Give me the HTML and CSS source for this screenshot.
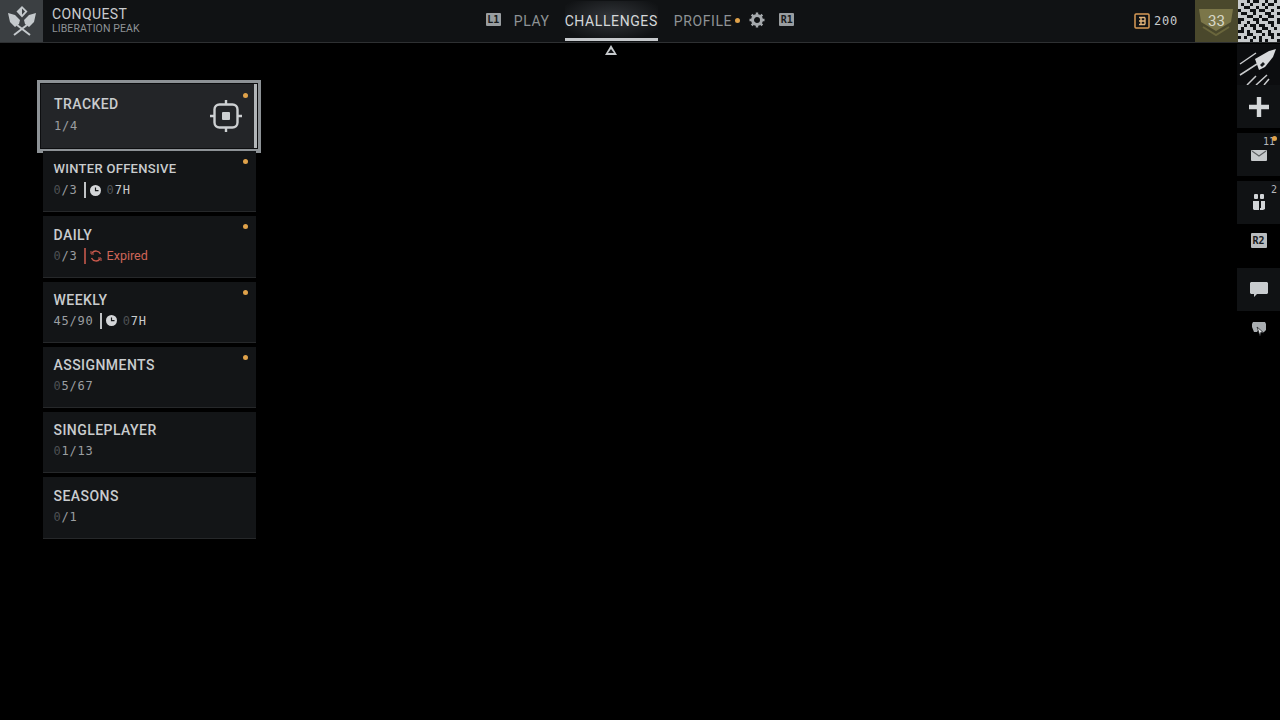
FILE: index.html
```html
<!DOCTYPE html>
<html lang="en">
<head>
    <meta charset="UTF-8">
    <title>Challenges</title>
    <meta name="viewport" content="width=device-width, initial-scale=1.0">
    <link rel="stylesheet" href="styles.css">
</head>
<body>
    <div class="topbar">
        <div class="mode">
            <div class="mode-icon">
                <svg width="32" height="32" viewBox="0 0 32 32">
                    <path d="M16 1l5.500 5.500-5.500 6-5.500-6z" fill="#c4c9cc"/>
                    <path d="M16 3.500l3 3-3 3.300z" fill="#3b3f42"/>
                    <path d="M2 8l7 2 5 5-1 4-4 3-5-5z M30 8l-7 2-5 5 1 4 4 3 5-5z" fill="#c4c9cc"/>
                    <path d="M11 20l13 10M21 20L8 30" stroke="#c4c9cc" stroke-width="2" fill="none"/>
                </svg>
            </div>
            <div class="mode-text">
                <div class="mode-name">CONQUEST</div>
                <div class="mode-map">LIBERATION PEAK</div>
            </div>
        </div>
        <div class="nav">
            <span class="key">L1</span>
            <a class="nav-link nav-play">PLAY</a>
            <a class="nav-link active">CHALLENGES</a>
            <a class="nav-link nav-profile">PROFILE</a>
            <span class="dot nav-dot"></span>
            <svg class="gear" width="16" height="16" viewBox="0 0 16 16">
                <circle cx="8" cy="8" r="4.500" fill="none" stroke="#a5a9ac" stroke-width="3"/>
                <path d="M8 0.500v15M0.500 8h15M2.700 2.700l10.600 10.600M13.300 2.700L2.700 13.300" stroke="#a5a9ac" stroke-width="2.400" stroke-dasharray="3 9"/>
            </svg>
            <span class="key key-r">R1</span>
        </div>
        <div class="status">
            <div class="credits">
                <svg width="16" height="16" viewBox="0 0 16 16">
                    <rect x="1" y="1" width="14" height="14" rx="1" fill="none" stroke="#d79a55" stroke-width="1.500"/>
                    <path d="M5 4.500h6M5 8h6M5 11.500h6M7 4.500v7M11 4.500v7" stroke="#e3b57c" stroke-width="1.400" fill="none"/>
                </svg>
                <span>200</span>
            </div>
            <div class="rank">
                <svg class="chevron" width="40" height="42" viewBox="0 0 40 42">
                    <path d="M3 9h34l-2 13-15 9-15-9z" fill="#7b7649"/>
                    <path d="M7 27l13 8 13-8" stroke="#6a663c" stroke-width="2" fill="none"/>
                </svg>
                <span>33</span>
            </div>
            <svg class="qr" width="42" height="42" viewBox="0 0 14 14" shape-rendering="crispEdges">
                <path fill="none" stroke="#c8cbcd" stroke-width="1" d="M0 .5h3m1 0h1m2 0h2m1 0h2m1 0h1M0 1.500h1m1 0h2m1 0h3m1 0h1m2 0h2M0 2.500h2m2 0h2m1 0h2m1 0h3M1 3.500h3m2 0h1m2 0h2m1 0h2M0 4.500h1m2 0h2m1 0h3m2 0h2M0 5.500h3m2 0h2m1 0h2m2 0h2M2 6.500h3m2 0h1m2 0h3M1 7.500h2m1 0h2m1 0h3m2 0h1M0 8.500h2m1 0h1m2 0h1m2 0h2m1 0h2M0 9.500h1m1 0h3m1 0h2m2 0h2m1 0h1M2 10.500h1m1 0h2m2 0h2m1 0h3M0 11.500h3m2 0h3m1 0h1m2 0h1M1 12.500h1m1 0h2m1 0h1m1 0h3m1 0h2M0 13.500h4m1 0h2m1 0h1m1 0h3"/>
            </svg>
        </div>
    </div>

    <div class="content">
        <div class="list">
            <div class="card tracked">
                <div class="card-text">
                    <div class="card-title">TRACKED</div>
                    <div class="card-meta"><span class="count">1/4</span></div>
                </div>
                <svg class="target" width="34" height="34" viewBox="0 0 34 34">
                    <rect x="5.500" y="5.500" width="23" height="23" rx="5" fill="none" stroke="#cdd0d2" stroke-width="2.400"/>
                    <rect x="13" y="13" width="8" height="8" rx="1" fill="#cdd0d2"/>
                    <path d="M17 1v4M17 29v4M1 17h4M29 17h4" stroke="#cdd0d2" stroke-width="2.400"/>
                </svg>
                <span class="dot card-dot"></span>
            </div>
            <div class="card">
                <div class="card-title title-small">WINTER OFFENSIVE</div>
                <div class="card-meta">
                    <span class="count"><i>0</i>/3</span>
                    <span class="sep"></span>
                    <svg class="clock" width="11" height="11" viewBox="0 0 11 11"><circle cx="5.500" cy="5.500" r="5.500" fill="#d4d6d8"/><path d="M5.500 2.500v3.200h3" stroke="#17191b" stroke-width="1.200" fill="none"/></svg>
                    <span class="time"><i>0</i>7H</span>
                </div>
                <span class="dot card-dot"></span>
            </div>
            <div class="card">
                <div class="card-title">DAILY</div>
                <div class="card-meta">
                    <span class="count"><i>0</i>/3</span>
                    <span class="sep sep-red"></span>
                    <svg class="clock" width="12" height="12" viewBox="0 0 12 12"><path d="M10.500 4A5 5 0 0 0 2 3M1.500 8A5 5 0 0 0 10 9" stroke="#c9584c" stroke-width="1.400" fill="none"/><path d="M1 1v3h3M11 11V8H8" stroke="#c9584c" stroke-width="1" fill="none"/></svg>
                    <span class="expired">Expired</span>
                </div>
                <span class="dot card-dot"></span>
            </div>
            <div class="card">
                <div class="card-title">WEEKLY</div>
                <div class="card-meta">
                    <span class="count">45/90</span>
                    <span class="sep"></span>
                    <svg class="clock" width="11" height="11" viewBox="0 0 11 11"><circle cx="5.500" cy="5.500" r="5.500" fill="#d4d6d8"/><path d="M5.500 2.500v3.200h3" stroke="#17191b" stroke-width="1.200" fill="none"/></svg>
                    <span class="time"><i>0</i>7H</span>
                </div>
                <span class="dot card-dot"></span>
            </div>
            <div class="card">
                <div class="card-title">ASSIGNMENTS</div>
                <div class="card-meta"><span class="count"><i>0</i>5/67</span></div>
                <span class="dot card-dot"></span>
            </div>
            <div class="card">
                <div class="card-title">SINGLEPLAYER</div>
                <div class="card-meta"><span class="count"><i>0</i>1/13</span></div>
            </div>
            <div class="card">
                <div class="card-title">SEASONS</div>
                <div class="card-meta"><span class="count"><i>0</i>/1</span></div>
            </div>
        </div>

        <div class="rail">
            <div class="rail-item rail-ship">
                <svg width="40" height="40" viewBox="0 0 40 40">
                    <path d="M16 14l14-8 7-2-3 8-8 10-6 3z" fill="#d8dadc"/>
                    <path d="M21 20l3-3 2 2-3 3z" fill="#17191b"/>
                    <path d="M1 19L17 8M1 30l17-11M8 40l9-9M17 40l11-10M25 40l5-6" stroke="#c9cbcd" stroke-width="1.500" fill="none"/>
                </svg>
            </div>
            <div class="rail-item rail-box">
                <svg width="20" height="20" viewBox="0 0 20 20"><path d="M10 0v20M0 10h20" stroke="#d4d7d9" stroke-width="4.400"/></svg>
            </div>
            <div class="rail-item rail-box rail-mail">
                <span class="badge">11</span>
                <span class="dot rail-dot"></span>
                <svg class="mail-icon" width="16" height="11" viewBox="0 0 16 11"><rect width="16" height="11" rx="1" fill="#c6c9cb"/><path d="M1 1l7 5 7-5" stroke="#5d6062" stroke-width="1.100" fill="none"/></svg>
            </div>
            <div class="rail-item rail-box rail-friends">
                <span class="badge">2</span>
                <svg width="14" height="17" viewBox="0 0 14 17" fill="#d2d5d7"><rect x="2" y="0" width="4" height="5" rx="1"/><rect x="8" y="0" width="4" height="5" rx="1"/><path d="M1 7h6v9H2l-1-1z"/><path d="M9 7h4v8l-2 1H8v-2h1z"/></svg>
            </div>
            <div class="rail-key"><span class="key key-r2">R2</span></div>
            <div class="rail-item rail-box rail-chat">
                <svg width="20" height="17" viewBox="0 0 20 17"><path d="M2 1h16l1 1v10l-1 1H8l-3 3v-3H2l-1-1V2z" fill="#c9cccf"/></svg>
            </div>
            <div class="rail-feedback">
                <svg width="16" height="16" viewBox="0 0 16 16"><path d="M2 1h12l1 2v6l-3 3-3-1-1-3-2 3H3L1 6V3z" fill="#a9adb0"/><path d="M6 6l3 9 1-4 3 1z" fill="#e1e3e4" stroke="#17191b" stroke-width=".7"/></svg>
            </div>
        </div>
    </div>
</body>
</html>
```

FILE: styles.css
```css
body {
    margin: 0;
    width: 1280px;
    height: 720px;
    overflow: hidden;
    background: #000;
    color: #c8cbce;
    font-family: "Roboto", "Liberation Sans", sans-serif;
}

/* top bar */
.topbar {
    height: 42px;
    background: #101214;
    border-bottom: 1px solid #2e3032;
    display: grid;
    grid-template-columns: 1fr auto 1fr;
}
.mode {
    display: flex;
    align-items: stretch;
}
.mode-icon {
    width: 43px;
    background: #3b3f42;
    display: flex;
    align-items: center;
    justify-content: center;
}
.mode-text {
    padding: 7px 0 0 9px;
}
.mode-name {
    font-size: 14px;
    line-height: 15px;
    letter-spacing: 0.4px;
    color: #c9ccce;
}
.mode-map {
    font-size: 10.5px;
    line-height: 14px;
    letter-spacing: 0.1px;
    color: #8f9396;
}
.nav {
    display: flex;
    align-items: center;
    height: 42px;
}
.key {
    font-family: "DejaVu Sans Mono", monospace;
    font-size: 10px;
    font-weight: bold;
    line-height: 13px;
    width: 15px;
    height: 13px;
    text-align: center;
    background: #999da0;
    color: #17191b;
    border-radius: 1px;
    margin-top: -3px;
}
.key-r {
    margin-left: 14px;
}
.nav-link {
    font-size: 14px;
    letter-spacing: 0.6px;
    color: #8e9295;
    height: 40px;
    line-height: 40px;
    box-sizing: border-box;
}
.nav-play {
    margin-left: 13px;
}
.nav-link.active {
    margin-left: 15px;
    color: #d5d8da;
    background: radial-gradient(ellipse 55px 24px at 50% 45%, #33363a, transparent);
    border-bottom: 3px solid #c6c9cc;
    position: relative;
}
.nav-link.active::after {
    content: "";
    position: absolute;
    left: 50%;
    top: 44px;
    margin-left: -6px;
    width: 0;
    height: 0;
    border-left: 6px solid transparent;
    border-right: 6px solid transparent;
    border-bottom: 10px solid #c6c9cc;
}
.nav-link.active::before {
    content: "";
    position: absolute;
    left: 50%;
    top: 48px;
    margin-left: -3px;
    width: 0;
    height: 0;
    border-left: 3px solid transparent;
    border-right: 3px solid transparent;
    border-bottom: 4px solid #111315;
    z-index: 1;
}
.nav-profile {
    margin-left: 16px;
}
.dot {
    width: 5px;
    height: 5px;
    border-radius: 50%;
    background: #e0a24a;
}
.nav-dot {
    margin: -2px 0 0 3px;
}
.gear {
    margin: -2px 0 0 9px;
}
.status {
    display: flex;
    justify-content: flex-end;
    align-items: stretch;
}
.credits {
    display: flex;
    align-items: center;
    gap: 4px;
    margin-right: 17px;
    font-family: "DejaVu Sans Mono", monospace;
    font-size: 12px;
    letter-spacing: 0.8px;
    color: #c8cbce;
}
.rank {
    width: 43px;
    background: #4a482c;
    position: relative;
    display: flex;
    align-items: center;
    justify-content: center;
    font-size: 15px;
    color: #d8d8c8;
}
.chevron {
    position: absolute;
    left: 1px;
    top: 0;
}
.rank span {
    position: relative;
}
.qr {
    display: block;
}

/* body */
.content {
    display: flex;
    justify-content: space-between;
    align-items: flex-start;
}
.list {
    margin: 37px 0 0 37px;
    width: 224px;
    display: flex;
    flex-direction: column;
    align-items: center;
    gap: 4px;
}
.card {
    position: relative;
    box-sizing: border-box;
    width: 213px;
    height: 61.25px;
    padding: 9.3px 10px 0 11px;
    background: #131517;
    border-bottom: 1px solid #26282a;
}
.card-title {
    font-size: 14px;
    line-height: 18px;
    font-weight: 500;
    letter-spacing: 0.45px;
    color: #c9ccce;
}
.title-small {
    font-size: 13px;
    letter-spacing: 0.3px;
}
.card-meta {
    display: flex;
    align-items: center;
    margin-top: 4px;
    height: 16px;
    font-family: "DejaVu Sans Mono", monospace;
    font-size: 12px;
    letter-spacing: 0.8px;
    color: #9b9ea1;
}
.card-meta i {
    font-style: normal;
    color: #4d5053;
}
.sep {
    width: 2px;
    height: 16px;
    margin: 0 4px 0 6px;
    background: #c0c3c5;
}
.sep-red {
    background: #a14a40;
}
.time {
    margin-left: 6px;
    color: #c9ccce;
}
.expired {
    margin-left: 5px;
    font-family: "Roboto", sans-serif;
    font-size: 12.5px;
    letter-spacing: 0;
    color: #cf6558;
}
.card-dot {
    position: absolute;
    top: 8px;
    right: 8px;
}
.card.tracked {
    width: 224px;
    height: 73px;
    margin-bottom: -6px;
    padding: 12px 13px 0 14px;
    background: #232528;
    border: 3px solid #8d9296;
    border-bottom-width: 4px;
    box-shadow: inset 0 0 0 1px #0d0e10;
}
.tracked .card-meta {
    margin-top: 5px;
}
.card.tracked::after {
    content: "";
    position: absolute;
    top: 1px;
    bottom: 1px;
    right: 1px;
    width: 3px;
    background: #b1b5b8;
}
.tracked .card-dot {
    top: 10px;
    right: 10px;
}
.target {
    position: absolute;
    top: 16px;
    right: 15px;
}

/* right rail */
.rail {
    width: 43px;
    margin-top: 1px;
    display: flex;
    flex-direction: column;
    align-items: center;
}
.rail-item {
    box-sizing: border-box;
    width: 43px;
    height: 43px;
    display: flex;
    align-items: center;
    justify-content: center;
    position: relative;
}
.rail-ship {
    height: 41px;
    background: #0c0d0f;
}
.rail-box {
    background: #101214;
}
.rail-mail {
    margin-top: 5px;
}
.mail-icon {
    margin-top: 2px;
}
.rail-friends {
    margin-top: 5px;
}
.badge {
    position: absolute;
    top: 3px;
    right: 3px;
    font-family: "DejaVu Sans Mono", monospace;
    font-size: 10px;
    line-height: 12px;
    color: #b4b7ba;
}
.rail-mail .badge {
    right: 5px;
}
.rail-dot {
    position: absolute;
    top: 3px;
    right: 3px;
}
.rail-key {
    height: 32px;
    margin-bottom: 12px;
    display: flex;
    align-items: center;
}
.key-r2 {
    background: #b9bcbe;
    width: 16px;
    height: 15px;
    line-height: 15px;
    margin-top: 0;
}
.rail-feedback {
    margin-top: 10px;
    height: 16px;
}
```
